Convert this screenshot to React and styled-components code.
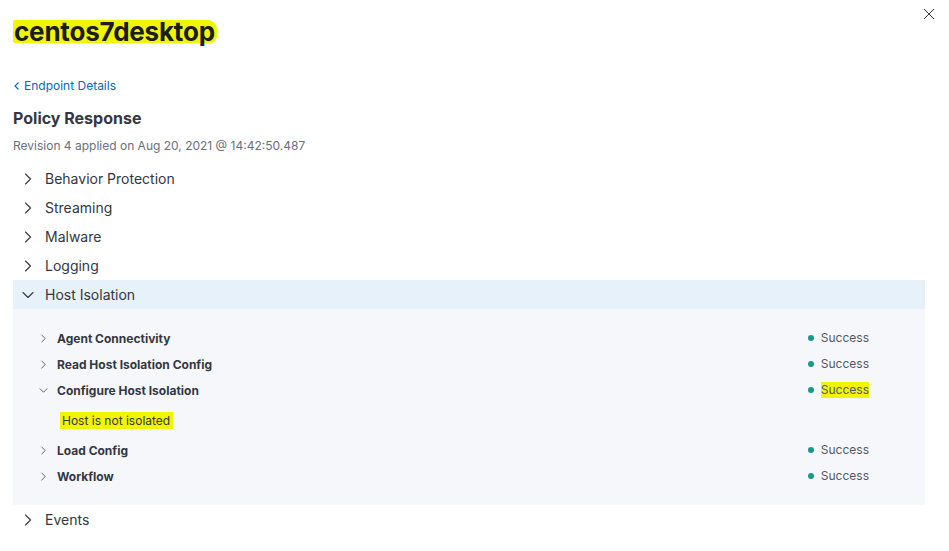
import React from "react";
import styled, { createGlobalStyle } from "styled-components";

const GlobalStyle = createGlobalStyle`
  body {
    margin: 0;
    background: #fff;
    font-family: Inter, "Noto Sans", sans-serif;
    color: #343741;
  }
`;

const Flyout = styled.div`
  position: relative;
  width: 949px;
  height: 551px;
  padding: 16px 24px 0 13px;
  box-sizing: border-box;
  overflow: hidden;
`;

const CloseButton = styled.button`
  position: absolute;
  top: 6px;
  right: 12px;
  width: 16px;
  height: 16px;
  padding: 0;
  border: none;
  background: none;
  color: #343741;
  display: flex;
  align-items: center;
  justify-content: center;
`;

const TitleWrap = styled.div`
  height: 44px;
  margin-top: -16px;
`;

const Title = styled.h1`
  margin: 20px 0 0;
  display: inline-block;
  height: 23px;
  padding: 0 2px 0 1px;
  font-size: 26px;
  line-height: 24px;
  font-weight: 700;
  color: #1a1c21;
  letter-spacing: -0.2px;
  background: #f2f500;
  border-radius: 2px 9px 7px 2px;
`;

const BackLink = styled.a`
  display: inline-flex;
  align-items: center;
  gap: 3px;
  margin-top: 34px;
  font-size: 12px;
  line-height: 16px;
  color: #006bb8;
  text-decoration: none;
`;

const Heading = styled.h2`
  margin: 13px 0 0;
  font-size: 16px;
  line-height: 20px;
  font-weight: 700;
  color: #343741;
`;

const Revision = styled.div`
  margin-top: 10px;
  font-size: 12px;
  line-height: 16px;
  color: #69707d;
`;

const Accordion = styled.div`
  margin-top: 10px;
  display: flex;
  flex-direction: column;
`;

const SectionRow = styled.div`
  height: 29px;
  display: flex;
  align-items: center;
  gap: 9px;
  padding-left: 7px;
  font-size: 14px;
  color: #343741;
  background: ${(p) => (p.$open ? "#e6f1fa" : "transparent")};
`;

const Panel = styled.div`
  background: #f5f7fa;
  padding: 16px 56px 16px 25px;
  display: flex;
  flex-direction: column;
`;

const ItemRow = styled.div`
  height: 26px;
  display: flex;
  align-items: center;
`;

const ItemTitle = styled.div`
  display: flex;
  align-items: center;
  gap: 8px;
  flex: 1;
  font-size: 12px;
  font-weight: 700;
  color: #343741;
`;

const Status = styled.div`
  display: flex;
  align-items: center;
  gap: 7px;
  width: 61px;
  font-size: 12px;
  color: #535966;
`;

const Dot = styled.span`
  width: 6px;
  height: 6px;
  border-radius: 50%;
  background: #1a9a8b;
`;

const StatusText = styled.span`
  line-height: 16px;
  background: ${(p) => (p.$marked ? "#f2f500" : "transparent")};
`;

const Message = styled.div`
  height: 34px;
  display: flex;
  align-items: center;
  padding-left: 22px;
`;

const Marked = styled.span`
  padding: 0 3px 0 2px;
  font-size: 12px;
  line-height: 17px;
  color: #343741;
  background: #f2f500;
`;

const Chevron = ({ down, size = 16 }) => (
  <svg width={size} height={size} viewBox="0 0 16 16" fill="none">
    <polyline
      points={down ? "3,5.5 8,10.5 13,5.5" : "5.5,3 10.5,8 5.5,13"}
      stroke="#343741"
      strokeWidth="1.1"
      strokeLinecap="round"
      strokeLinejoin="round"
    />
  </svg>
);

const sections = ["Behavior Protection", "Streaming", "Malware", "Logging"];

const items = [
  { name: "Agent Connectivity" },
  { name: "Read Host Isolation Config" },
  { name: "Configure Host Isolation", open: true, marked: true, message: "Host is not isolated" },
  { name: "Load Config" },
  { name: "Workflow" },
];

export default function App() {
  return (
    <>
      <GlobalStyle />
      <Flyout>
        <CloseButton aria-label="Close">
          <svg width="12" height="12" viewBox="0 0 12 12">
            <path d="M1 1 L11 11 M11 1 L1 11" stroke="#343741" strokeWidth="1" />
          </svg>
        </CloseButton>
        <TitleWrap>
          <Title>centos7desktop</Title>
        </TitleWrap>
        <BackLink href="#">
          <svg width="8" height="10" viewBox="0 0 8 10">
            <polyline points="5.5,1.5 2,5 5.5,8.5" fill="none" stroke="#006bb8" strokeWidth="1.1" />
          </svg>
          Endpoint Details
        </BackLink>
        <Heading>Policy Response</Heading>
        <Revision>Revision 4 applied on Aug 20, 2021 @ 14:42:50.487</Revision>
        <Accordion>
          {sections.map((s) => (
            <SectionRow key={s}>
              <Chevron />
              {s}
            </SectionRow>
          ))}
          <SectionRow $open>
            <Chevron down />
            Host Isolation
          </SectionRow>
          <Panel>
            {items.map((it) => (
              <React.Fragment key={it.name}>
                <ItemRow>
                  <ItemTitle>
                    <Chevron down={it.open} size={11} />
                    {it.name}
                  </ItemTitle>
                  <Status>
                    <Dot />
                    <StatusText $marked={it.marked}>Success</StatusText>
                  </Status>
                </ItemRow>
                {it.message && (
                  <Message>
                    <Marked>{it.message}</Marked>
                  </Message>
                )}
              </React.Fragment>
            ))}
          </Panel>
          <SectionRow>
            <Chevron />
            Events
          </SectionRow>
        </Accordion>
      </Flyout>
    </>
  );
}
